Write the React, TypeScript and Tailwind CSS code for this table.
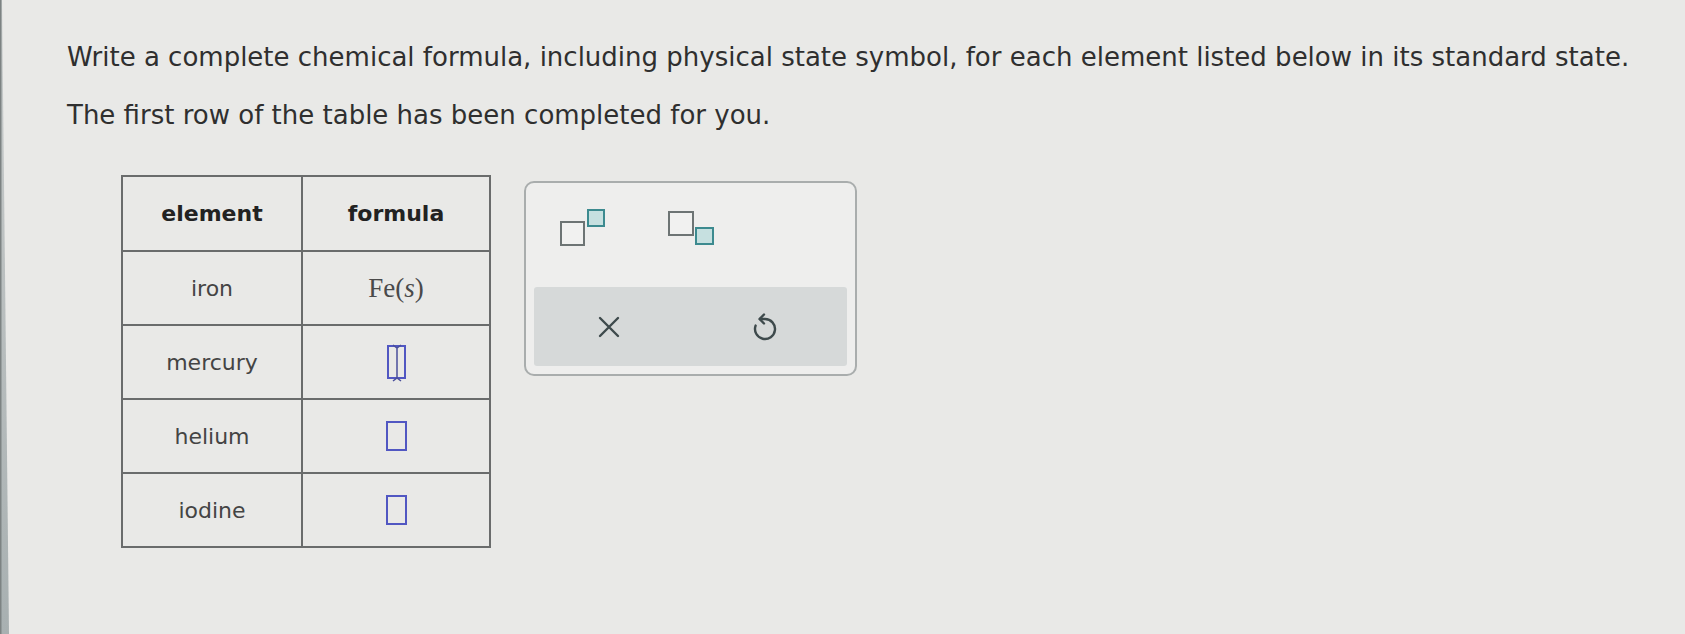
import React from "react";

const font = { fontFamily: '"DejaVu Sans", Verdana, sans-serif' };

function InputBox({ cursor = false }: { cursor?: boolean }) {
  if (cursor) {
    return (
      <div className="relative w-[19px] h-[34px] border-2 border-[#5157c2]">
        <svg className="absolute left-[1px] top-[-4px]" width="14" height="40" viewBox="0 0 14 40">
          <path d="M3 2 L7 5 L11 2 M7 5 L7 35 M3 38 L7 35 L11 38" stroke="#4a4f9c" strokeWidth="1.5" fill="none" />
        </svg>
      </div>
    );
  }
  return <div className="w-[21px] h-[30px] border-2 border-[#5157c2]" />;
}

export default function App() {
  const rows: { el: string; f: React.ReactNode }[] = [
    {
      el: "iron",
      f: (
        <span className="text-[27px] text-[#4a4a4a]" style={{ fontFamily: '"Liberation Serif", "Times New Roman", serif' }}>
          Fe(<span className="italic">s</span>)
        </span>
      ),
    },
    { el: "mercury", f: <InputBox cursor /> },
    { el: "helium", f: <InputBox /> },
    { el: "iodine", f: <InputBox /> },
  ];

  return (
    <div className="w-[1685px] h-[634px] flex bg-[#e9e9e7] overflow-hidden" style={font}>
      <div className="w-[9px] h-full shrink-0">
        <svg width="9" height="634" viewBox="0 0 9 634" preserveAspectRatio="none">
          <defs>
            <linearGradient id="edge" x1="0" y1="0" x2="0" y2="1">
              <stop offset="0" stopColor="#c9cccc" />
              <stop offset="1" stopColor="#a8b0b1" />
            </linearGradient>
          </defs>
          <polygon points="0,0 2,0 9,634 0,634" fill="url(#edge)" />
          <rect x="0" y="0" width="1.5" height="634" fill="#7d8383" />
        </svg>
      </div>
      <div className="flex-1 pl-[58px] pt-[41px]">
        <p className="text-[26px] leading-[32px] text-[#2f2f2f] whitespace-nowrap">
          Write a complete chemical formula, including physical state symbol, for each element listed below in its standard state.
        </p>
        <p className="mt-[26px] text-[26px] leading-[32px] text-[#2f2f2f] whitespace-nowrap">
          The first row of the table has been completed for you.
        </p>

        <div className="mt-[44px] ml-[54px] flex items-start gap-[33px]">
          <table className="border-collapse border-2 border-[#6a6c6c]">
            <thead>
              <tr className="h-[75px]">
                <th className="w-[180px] border-2 border-[#6a6c6c] text-[22px] font-bold text-[#222222] text-center">element</th>
                <th className="w-[188px] border-2 border-[#6a6c6c] text-[22px] font-bold text-[#222222] text-center">formula</th>
              </tr>
            </thead>
            <tbody>
              {rows.map((r) => (
                <tr key={r.el} className="h-[74px]">
                  <td className="border-2 border-[#6a6c6c] text-[22px] text-[#444444] text-center">{r.el}</td>
                  <td className="border-2 border-[#6a6c6c] text-center">
                    <div className="flex justify-center items-center">{r.f}</div>
                  </td>
                </tr>
              ))}
            </tbody>
          </table>

          <div className="mt-[6px] w-[333px] h-[195px] rounded-[10px] border-2 border-[#a9adad] bg-[#eeeeed] p-[8px] pt-[10px] flex flex-col">
            <div className="h-[94px] flex items-start pl-[26px] pt-[16px] gap-[61px]">
              <div className="relative w-[47px] h-[38px]">
                <div className="absolute left-0 top-[12px] w-[25px] h-[25px] border-2 border-[#6d7474] bg-[#f1f1f0]" />
                <div className="absolute left-[27px] top-[0px] w-[18px] h-[18px] border-2 border-[#3c8a8f] bg-[#c6e0e0]" />
              </div>
              <div className="relative w-[47px] h-[38px]">
                <div className="absolute left-0 top-[2px] w-[26px] h-[25px] border-2 border-[#6d7474] bg-[#f1f1f0]" />
                <div className="absolute left-[27px] top-[18px] w-[19px] h-[18px] border-2 border-[#3c8a8f] bg-[#c6e0e0]" />
              </div>
            </div>
            <div className="flex-1 rounded-[3px] bg-[#d6d9d9] flex items-center">
              <div className="w-[150px] flex justify-center">
                <svg width="22" height="22" viewBox="0 0 22 22">
                  <path d="M2 2 L20 20 M20 2 L2 20" stroke="#3e4a4c" strokeWidth="2.4" strokeLinecap="round" />
                </svg>
              </div>
              <div className="w-[160px] flex justify-center pl-[2px]">
                <svg width="28" height="32" viewBox="0 0 28 32">
                  <path d="M9 8 H14 A10 10 0 1 1 4.6 14.6" stroke="#3e4a4c" strokeWidth="2.4" fill="none" strokeLinecap="round" />
                  <path d="M13 3.5 L8.5 8 L13 12.5" stroke="#3e4a4c" strokeWidth="2.4" fill="none" strokeLinecap="round" strokeLinejoin="round" />
                </svg>
              </div>
            </div>
          </div>
        </div>
      </div>
    </div>
  );
}
